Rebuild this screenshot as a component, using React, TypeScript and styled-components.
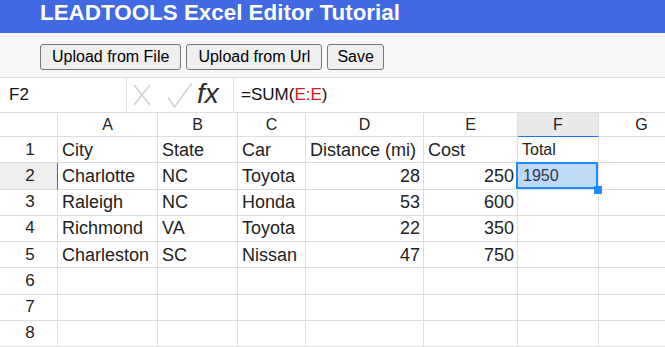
import React from "react";
import styled, { createGlobalStyle, css } from "styled-components";

const GlobalStyle = createGlobalStyle`
  html, body {
    margin: 0;
    padding: 0;
    background: #ffffff;
    overflow: hidden;
  }
  body {
    font-family: "Liberation Sans", Arial, Helvetica, sans-serif;
    color: #222;
  }
  * { box-sizing: border-box; }
`;

const Page = styled.div`
  width: 665px;
  height: 347px;
  overflow: hidden;
  display: flex;
  flex-direction: column;
`;

const TitleBar = styled.header`
  height: 33px;
  flex: 0 0 33px;
  background: #4169e1;
  padding-left: 40px;
  display: flex;
  align-items: flex-start;
`;

const Title = styled.h1`
  margin: 0;
  font-size: 22.4px;
  line-height: 25px;
  font-weight: 700;
  color: #ffffff;
  white-space: nowrap;
`;

const Toolbar = styled.div`
  height: 44px;
  flex: 0 0 44px;
  background: #f8f8f8;
  padding: 11px 0 0 40px;
  display: flex;
  align-items: flex-start;
  gap: 5px;
`;

const Button = styled.button<{ $compact?: boolean }>`
  font-family: "Liberation Sans", Arial, sans-serif;
  font-size: 16px;
  line-height: 18px;
  height: 26px;
  padding: ${(p) => (p.$compact ? "3px 9px" : "3px 11px")};
  color: #000;
  background: #efefef;
  border: 1px solid #767676;
  border-radius: 3px;
  white-space: nowrap;
`;

const FormulaBar = styled.div`
  height: 36px;
  flex: 0 0 36px;
  border-top: 1px solid #dcdcdc;
  border-bottom: 1px solid #dcdcdc;
  display: flex;
  align-items: stretch;
  background: #fff;
`;

const NameBox = styled.div`
  width: 127px;
  flex: 0 0 127px;
  border-right: 1px solid #dcdcdc;
  padding-left: 9px;
  display: flex;
  align-items: center;
  font-size: 17px;
  color: #111;
`;

const FnBox = styled.div`
  width: 107px;
  flex: 0 0 107px;
  border-right: 1px solid #dcdcdc;
  display: flex;
  align-items: center;
  padding-left: 6px;
`;

const IconSlot = styled.span<{ $ml?: number }>`
  display: inline-flex;
  margin-left: ${(p) => p.$ml ?? 0}px;
`;

const Fx = styled.span`
  font-family: "Liberation Sans", Arial, sans-serif;
  font-style: italic;
  font-size: 28px;
  line-height: 28px;
  color: #2b2b2b;
  margin-left: 5px;
  margin-top: -2px;
`;

const FormulaText = styled.div`
  flex: 1;
  display: flex;
  align-items: center;
  padding-left: 7px;
  font-size: 17px;
  color: #111;
  white-space: nowrap;
`;

const Ref = styled.span`
  color: #d0201f;
`;

const Sheet = styled.div`
  flex: 0 0 auto;
  display: grid;
  grid-template-columns: 58px 100px 80px 68px 118px 94px 81px 86px;
  grid-template-rows: 24px repeat(8, 26.25px);
  width: 685px;
`;

const cellBase = css`
  border-right: 1px solid #dedede;
  border-bottom: 1px solid #dedede;
  display: flex;
  align-items: center;
  white-space: nowrap;
  overflow: visible;
  position: relative;
`;

const ColHeader = styled.div<{ $active?: boolean }>`
  ${cellBase};
  justify-content: center;
  font-size: 16px;
  color: #222;
  background: ${(p) => (p.$active ? "#e9e9e9" : "#ffffff")};
  ${(p) =>
    p.$active &&
    css`
      border-bottom-color: #1a73e8;
    `}
`;

const RowHeader = styled.div<{ $active?: boolean }>`
  ${cellBase};
  justify-content: center;
  padding-left: 3px;
  font-size: 17px;
  color: #222;
  background: ${(p) => (p.$active ? "#eeeeee" : "#ffffff")};
  ${(p) =>
    p.$active &&
    css`
      border-right-color: #1a73e8;
    `}
`;

const Cell = styled.div<{ $num?: boolean; $small?: boolean; $selected?: boolean }>`
  ${cellBase};
  font-size: ${(p) => (p.$small ? 16 : 18)}px;
  color: #222;
  justify-content: ${(p) => (p.$num ? "flex-end" : "flex-start")};
  padding: ${(p) => (p.$num ? "1px 3px 0 0" : "1px 0 0 4px")};
  ${(p) =>
    p.$selected &&
    css`
      background: #bed8f6;
      color: #2a3a52;
      padding-left: 5px;
      z-index: 2;
      &::after {
        content: "";
        position: absolute;
        left: -2px;
        top: -1px;
        right: 0;
        bottom: 0;
        border: 2px solid #1a8cff;
        pointer-events: none;
      }
    `}
`;

const FillHandle = styled.span`
  position: absolute;
  right: -4px;
  bottom: -5px;
  width: 8px;
  height: 8px;
  background: #1a8cff;
  z-index: 3;
`;

const columns = ["A", "B", "C", "D", "E", "F", "G"];
const numericCols = new Set([3, 4]);

const rows: string[][] = [
  ["City", "State", "Car", "Distance (mi)", "Cost", "Total", ""],
  ["Charlotte", "NC", "Toyota", "28", "250", "1950", ""],
  ["Raleigh", "NC", "Honda", "53", "600", "", ""],
  ["Richmond", "VA", "Toyota", "22", "350", "", ""],
  ["Charleston", "SC", "Nissan", "47", "750", "", ""],
  ["", "", "", "", "", "", ""],
  ["", "", "", "", "", "", ""],
  ["", "", "", "", "", "", ""],
];

const CrossIcon = () => (
  <svg width="18" height="22" viewBox="0 0 18 22" aria-hidden="true">
    <path d="M1 1 L17 21 M17 1 L1 21" stroke="#d2d2d2" strokeWidth="1.6" fill="none" />
  </svg>
);

const CheckIcon = () => (
  <svg width="25" height="25" viewBox="0 0 25 25" aria-hidden="true">
    <path d="M1 14.5 L7.5 24 L24.5 0.5" stroke="#d2d2d2" strokeWidth="1.6" fill="none" />
  </svg>
);

export default function App() {
  const selRow = 1;
  const selCol = 5;
  return (
    <>
      <GlobalStyle />
      <Page>
        <TitleBar>
          <Title>LEADTOOLS Excel Editor Tutorial</Title>
        </TitleBar>
        <Toolbar>
          <Button>Upload from File</Button>
          <Button>Upload from Url</Button>
          <Button $compact>Save</Button>
        </Toolbar>
        <FormulaBar>
          <NameBox>F2</NameBox>
          <FnBox>
            <IconSlot>
              <CrossIcon />
            </IconSlot>
            <IconSlot $ml={16}>
              <CheckIcon />
            </IconSlot>
            <Fx>fx</Fx>
          </FnBox>
          <FormulaText>
            =SUM(<Ref>E:E</Ref>)
          </FormulaText>
        </FormulaBar>
        <Sheet>
          <ColHeader />
          {columns.map((c, i) => (
            <ColHeader key={c} $active={i === selCol}>
              {c}
            </ColHeader>
          ))}
          {rows.map((r, ri) => (
            <React.Fragment key={ri}>
              <RowHeader $active={ri === selRow}>{ri + 1}</RowHeader>
              {r.map((v, ci) => {
                const selected = ri === selRow && ci === selCol;
                return (
                  <Cell
                    key={ci}
                    $num={numericCols.has(ci) && ri > 0}
                    $small={ci === 5}
                    $selected={selected}
                  >
                    {v}
                    {selected && <FillHandle />}
                  </Cell>
                );
              })}
            </React.Fragment>
          ))}
        </Sheet>
      </Page>
    </>
  );
}
